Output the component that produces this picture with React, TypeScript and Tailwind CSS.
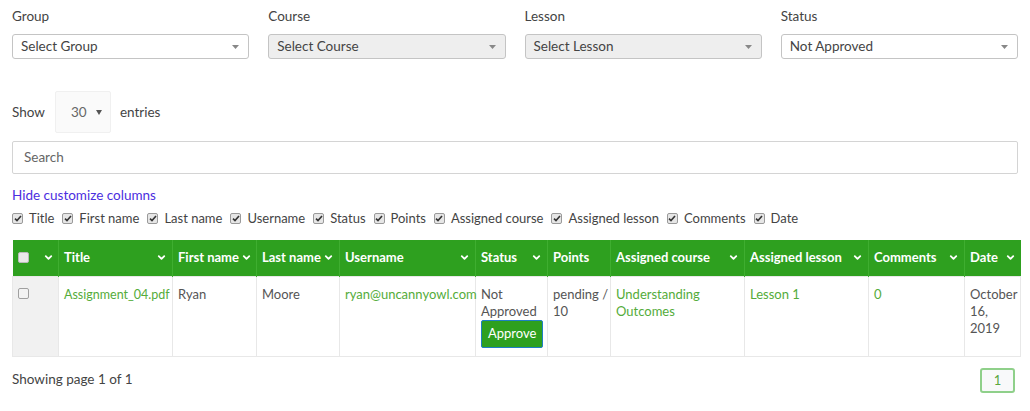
import { ChevronDown } from "lucide-react";

const filters = [
  { label: "Group", value: "Select Group", disabled: false },
  { label: "Course", value: "Select Course", disabled: true },
  { label: "Lesson", value: "Select Lesson", disabled: true },
  { label: "Status", value: "Not Approved", disabled: false },
];

const columnToggles = [
  "Title",
  "First name",
  "Last name",
  "Username",
  "Status",
  "Points",
  "Assigned course",
  "Assigned lesson",
  "Comments",
  "Date",
];

const columns = [
  { label: "Title", width: "w-[114px]", chevron: true },
  { label: "First name", width: "w-[84px]", chevron: true },
  { label: "Last name", width: "w-[83px]", chevron: true },
  { label: "Username", width: "w-[136px]", chevron: true },
  { label: "Status", width: "w-[72px]", chevron: true },
  { label: "Points", width: "w-[63px]", chevron: false },
  { label: "Assigned course", width: "w-[134px]", chevron: true },
  { label: "Assigned lesson", width: "w-[124px]", chevron: true },
  { label: "Comments", width: "w-[96px]", chevron: true },
  { label: "Date", width: "w-[56px]", chevron: true },
];

function Caret() {
  return (
    <svg width="7" height="4" viewBox="0 0 7 4" className="shrink-0">
      <path d="M0 0h7L3.5 4z" fill="#888" />
    </svg>
  );
}

function HeadChevron() {
  return <ChevronDown size={11} strokeWidth={4} className="shrink-0 text-white" />;
}

function FakeCheck({ checked }: { checked: boolean }) {
  return (
    <span className="inline-flex h-[11px] w-[11px] shrink-0 items-center justify-center rounded-[2px] border border-[#9a9a9a] bg-[#e6e6e6]">
      {checked && (
        <svg width="8" height="7" viewBox="0 0 8 7">
          <path d="M1 3.6l2 2L7 1" stroke="#333" strokeWidth="1.6" fill="none" />
        </svg>
      )}
    </span>
  );
}

const cell = "border border-[#e8e8e8] px-[5px] pt-[9px]";

export default function App() {
  return (
    <div className="w-[1030px] bg-white px-[12px] pt-[8px] text-[13px] leading-[17px] text-[#555] [font-family:Lato,sans-serif]">
      {/* Filters */}
      <div className="grid grid-cols-4 gap-x-[19px] text-[13.5px]">
        {filters.map((f) => (
          <div key={f.label}>
            <div className="mb-[9px] h-[17px] text-[#444]">{f.label}</div>
            <div
              className={`flex h-[25px] items-center justify-between rounded-[3px] border border-[#c4c4c4] pl-[8px] pr-[9px] ${
                f.disabled ? "bg-[#eeeeee]" : "bg-white"
              }`}
            >
              <span className="text-[#444]">{f.value}</span>
              <Caret />
            </div>
          </div>
        ))}
      </div>

      {/* Show entries */}
      <div className="mt-[32px] flex items-center text-[13.5px]">
        <span className="text-[#444]">Show</span>
        <div className="ml-[10px] flex h-[42px] w-[56px] items-center justify-between rounded-[2px] border border-[#f0f0f0] bg-[#fafafa] pl-[15px] pr-[8px]">
          <span className="text-[#666]">30</span>
          <svg width="6" height="5" viewBox="0 0 6 5">
            <path d="M0 0h6L3 5z" fill="#555" />
          </svg>
        </div>
        <span className="ml-[9px] text-[#444]">entries</span>
      </div>

      {/* Search */}
      <div className="mt-[8px] flex h-[33px] items-center rounded-[2px] border border-[#d4d4d4] px-[11px] text-[13.5px] text-[#666]">
        Search
      </div>

      <div className="mt-[13px] text-[13.5px] text-[#4b2ee0]">Hide customize columns</div>

      <div className="mt-[6px] flex items-center">
        {columnToggles.map((c) => (
          <label key={c} className="mr-[8px] flex items-center gap-[6px] text-[#444]">
            <FakeCheck checked />
            {c}
          </label>
        ))}
      </div>

      {/* Table */}
      <table className="mt-[13px] w-[1008px] table-fixed border-collapse">
        <thead>
          <tr className="h-[36px] bg-[#2ea01f] text-left font-bold text-white">
            <th className="w-[46px] border-r border-[#3fae30] pl-[5px] pr-[4px]">
              <div className="flex items-center justify-between">
                <span className="h-[11px] w-[11px] rounded-[2px] border border-[#bbb] bg-[#e9e9e9]" />
                <HeadChevron />
              </div>
            </th>
            {columns.map((c) => (
              <th key={c.label} className={`${c.width} border-r border-[#3fae30] px-[5px] last:border-r-0`}>
                <div className="flex items-center justify-between gap-[2px] whitespace-nowrap">
                  <span>{c.label}</span>
                  {c.chevron && <HeadChevron />}
                </div>
              </th>
            ))}
          </tr>
        </thead>
        <tbody>
          <tr className="h-[80px] align-top">
            <td className="border border-[#e8e8e8] bg-[#f1f1f1] pl-[5px] pt-[11px]">
              <span className="block h-[11px] w-[11px] rounded-[2px] border border-[#a0a0a0] bg-[#f3f3f3]" />
            </td>
            <td className={`${cell} whitespace-nowrap text-[12.5px] text-[#54ac3a]`}>Assignment_04.pdf</td>
            <td className={cell}>Ryan</td>
            <td className={cell}>Moore</td>
            <td className={`${cell} text-[#54ac3a]`}>ryan@uncannyowl.com</td>
            <td className={cell}>
              <div>Not</div>
              <div>Approved</div>
              <button className="h-[28px] rounded-[2px] border border-[#1f7fc3] bg-[#2ea01f] px-[6px] text-white">
                Approve
              </button>
            </td>
            <td className={`${cell} pr-[1px]`}>{"pending\u00a0/ 10"}</td>
            <td className={`${cell} text-[#54ac3a]`}>Understanding Outcomes</td>
            <td className={`${cell} text-[#54ac3a]`}>Lesson 1</td>
            <td className={`${cell} text-[#54ac3a]`}>0</td>
            <td className={cell}>October 16, 2019</td>
          </tr>
        </tbody>
      </table>

      {/* Footer */}
      <div className="mt-[11px] flex items-start justify-between">
        <span className="mt-[3px] text-[13.5px] text-[#444]">Showing page 1 of 1</span>
        <span className="mr-[3px] flex h-[25px] w-[35px] items-center justify-center rounded-[3px] border-2 border-[#8fd08a] bg-[#f8f9fa] text-[#5aa83f]">
          1
        </span>
      </div>
    </div>
  );
}
